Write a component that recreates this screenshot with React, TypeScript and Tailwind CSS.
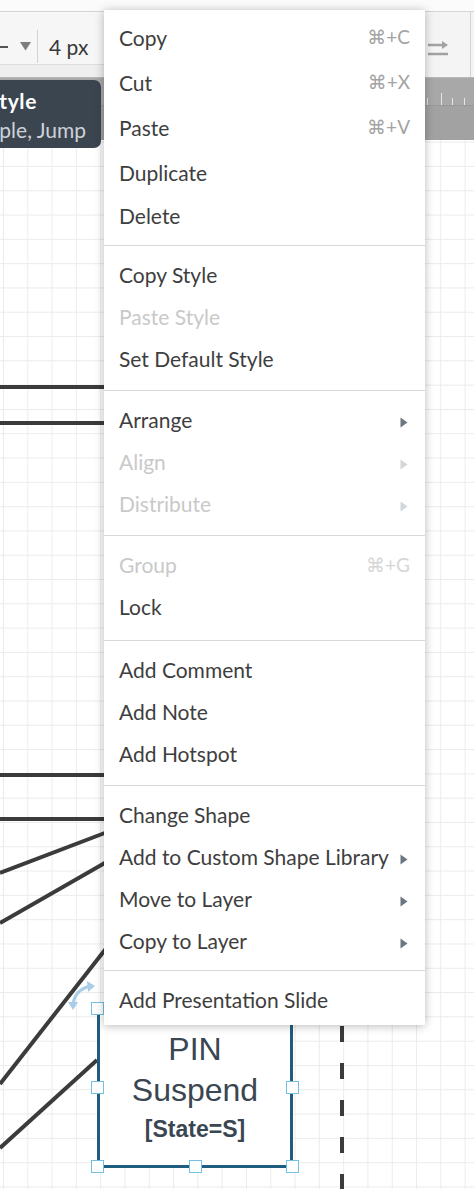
import React from 'react';

type Item = {
  label: string;
  shortcut?: string;
  submenu?: boolean;
  disabled?: boolean;
  tall?: boolean;
};

const groups: { rows: Item[]; pad: string }[] = [
  {
    pad: 'pt-[7px] pb-[6px]',
    rows: [
      { label: 'Copy', shortcut: '⌘+C', tall: true },
      { label: 'Cut', shortcut: '⌘+X', tall: true },
      { label: 'Paste', shortcut: '⌘+V', tall: true },
      { label: 'Duplicate', tall: true },
      { label: 'Delete' },
    ],
  },
  {
    pad: 'pt-[10px] pb-[8px]',
    rows: [{ label: 'Copy Style' }, { label: 'Paste Style', disabled: true }, { label: 'Set Default Style' }],
  },
  {
    pad: 'pt-[10px] pb-[8px]',
    rows: [
      { label: 'Arrange', submenu: true },
      { label: 'Align', submenu: true, disabled: true },
      { label: 'Distribute', submenu: true, disabled: true },
    ],
  },
  {
    pad: 'pt-[10px] pb-[10px]',
    rows: [{ label: 'Group', shortcut: '⌘+G', disabled: true }, { label: 'Lock' }],
  },
  {
    pad: 'pt-[10px] pb-[8px]',
    rows: [{ label: 'Add Comment' }, { label: 'Add Note' }, { label: 'Add Hotspot' }],
  },
  {
    pad: 'pt-[10px] pb-[6px]',
    rows: [
      { label: 'Change Shape' },
      { label: 'Add to Custom Shape Library', submenu: true },
      { label: 'Move to Layer', submenu: true },
      { label: 'Copy to Layer', submenu: true },
    ],
  },
  {
    pad: 'pt-[10px] pb-[2px]',
    rows: [{ label: 'Add Presentation Slide' }],
  },
];

const Arrow = ({ disabled }: { disabled?: boolean }) => (
  <svg width="8" height="11" viewBox="0 0 8 11" className="shrink-0">
    <path d="M0.5 0.5 L7.5 5.5 L0.5 10.5 Z" fill={disabled ? '#d3d7db' : '#6c7681'} />
  </svg>
);

const MenuRow = ({ item }: { item: Item }) => (
  <div className={`${item.tall ? 'h-[45px]' : 'h-[42px]'} flex items-center pl-[15px] pr-[17px]`}>
    <span
      className={`relative -top-[2px] flex-1 whitespace-nowrap text-[21px] ${
        item.disabled ? 'text-[#c9c9c9]' : 'text-[#3e3e3e]'
      }`}
    >
      {item.label}
    </span>
    {item.shortcut && (
      <span
        className={`relative -top-[2px] text-[19px] -mr-[2px] ${
          item.disabled ? 'text-[#d6d6d6]' : 'text-[#a3a3a3]'
        }`}
      >
        {item.shortcut}
      </span>
    )}
    {item.submenu && <Arrow disabled={item.disabled} />}
  </div>
);

// selection handle, centred on a point of the shape
const Handle = ({ x, y }: { x: number; y: number }) => (
  <div
    className="absolute w-[13px] h-[13px] bg-white border border-[#72c0e2]"
    style={{ left: x - 6, top: y - 6 }}
  />
);

export default function App() {
  return (
    <div className="relative w-[474px] h-[1189px] overflow-hidden bg-white font-['Lato','DejaVu_Sans',sans-serif]">
      {/* top strip */}
      <div className="h-[12px] bg-[#fbfbfb] border-b border-[#d3d3d3]" />

      {/* toolbar */}
      <div className="h-[66px] flex border-b border-[#b9b9b9]">
        <div className="flex-1 flex flex-col">
          <div className="h-[53px] bg-[#f6f6f6] border-b border-[#dedede] flex items-start pt-[18px]">
            <div className="h-[33px] w-[38px] flex items-center border-r border-[#d2d2d2]">
              <div className="w-[8px] h-[2px] bg-[#555]" />
              <svg width="11" height="9" viewBox="0 0 11 9" className="ml-[12px]">
                <path d="M0 0 L11 0 L5.5 8.5 Z" fill="#7d7d7d" />
              </svg>
            </div>
            <span className="ml-[11px] h-[33px] flex items-center text-[21px] text-[#383838]">4 px</span>
          </div>
          <div className="flex-1 bg-[#eeeeee]" />
        </div>
        <div className="w-[50px] flex bg-[#f4f4f4]">
          <div className="w-[47px] border-r border-[#d4d4d4] flex items-start pt-[28px] pl-[4px]">
            <svg width="22" height="16" viewBox="0 0 22 16">
              <path d="M0 5 H17" stroke="#a2a2a2" strokeWidth="2.5" />
              <path d="M14 1 L20 5 L14 9 Z" fill="#a2a2a2" />
              <path d="M0 14 H20" stroke="#a2a2a2" strokeWidth="2.5" />
            </svg>
          </div>
        </div>
      </div>

      {/* ruler bands */}
      <div className="h-[27px] bg-[#a8a8a8] flex items-end justify-end pr-[9px]">
        <div className="w-px h-[7px] bg-[#e4e4e4]" />
        <div className="ml-[13px] w-px h-[12px] bg-[#e4e4e4]" />
        <div className="ml-[10px] w-px h-[7px] bg-[#e4e4e4]" />
        <div className="ml-[11px] w-px h-[7px] bg-[#e4e4e4]" />
      </div>
      <div className="h-[35px] bg-[#a2a2a2] border-t border-[#999999]" />

      {/* canvas */}
      <div className="h-[1049px] bg-white [background-image:linear-gradient(to_right,#ebebeb_1px,transparent_1px),linear-gradient(to_bottom,#ebebeb_1px,transparent_1px)] [background-size:24.3px_24.3px] [background-position:3px_1.7px]" />

      {/* connectors */}
      <svg className="absolute left-0 top-0" width="474" height="1189">
        <g stroke="#3b3b3b" strokeWidth="4" fill="none">
          <path d="M0 387 H110" />
          <path d="M0 423 H110" />
          <path d="M0 775 H110" />
          <path d="M0 819 H110" />
          <path d="M0 873 L110 831" />
          <path d="M0 923 L110 860" />
          <path d="M0 1084 L108 946" />
          <path d="M0 1148 L97 1060" />
          <path d="M342 1026 V1189" strokeDasharray="16 21" />
        </g>
        <g stroke="#a8cde8" strokeWidth="3" fill="none" strokeLinecap="round">
          <path d="M73 1004 Q75 990 90 986" />
        </g>
        <path d="M87 981 L95 986 L88 992 Z" fill="#a8cde8" />
        <path d="M68 1002 L73 1010 L78 1002 Z" fill="#a8cde8" />
      </svg>

      {/* selected shape */}
      <div className="absolute left-[97px] top-[1008px] w-[196px] h-[160px] border-[3px] border-[#1f5d7e] bg-white flex flex-col items-center font-['Liberation_Sans',Arial,sans-serif] text-[#3a4651]">
        <div className="mt-[18px] text-[32px] leading-[40px]">PIN</div>
        <div className="text-[32px] leading-[42px]">Suspend</div>
        <div className="text-[23px] leading-[36px] font-bold">[State=S]</div>
      </div>
      <Handle x={97} y={1008} />
      <Handle x={97} y={1087} />
      <Handle x={292} y={1087} />
      <Handle x={97} y={1166} />
      <Handle x={195} y={1166} />
      <Handle x={292} y={1166} />

      {/* tooltip */}
      <div className="absolute left-[-10px] top-[80px] w-[111px] h-[68px] rounded-[7px] bg-[#3b4550] overflow-hidden flex flex-col">
        <div className="mt-[6px] w-[47px] flex justify-end whitespace-nowrap text-[21px] leading-[29px] font-bold tracking-[0.6px] text-white">
          Line Style
        </div>
        <div className="w-[96px] flex justify-end whitespace-nowrap text-[21px] leading-[29px] text-[#cdd2d8]">
          Simple, Jump
        </div>
      </div>

      {/* context menu */}
      <div className="absolute left-[104px] top-[10px] w-[321px] bg-white shadow-[0_1px_9px_rgba(0,0,0,0.28)]">
        {groups.map((g, gi) => (
          <div key={gi} className={`${g.pad} ${gi > 0 ? 'border-t border-[#d8d8d8]' : ''}`}>
            {g.rows.map((item) => (
              <MenuRow key={item.label} item={item} />
            ))}
          </div>
        ))}
      </div>
    </div>
  );
}
